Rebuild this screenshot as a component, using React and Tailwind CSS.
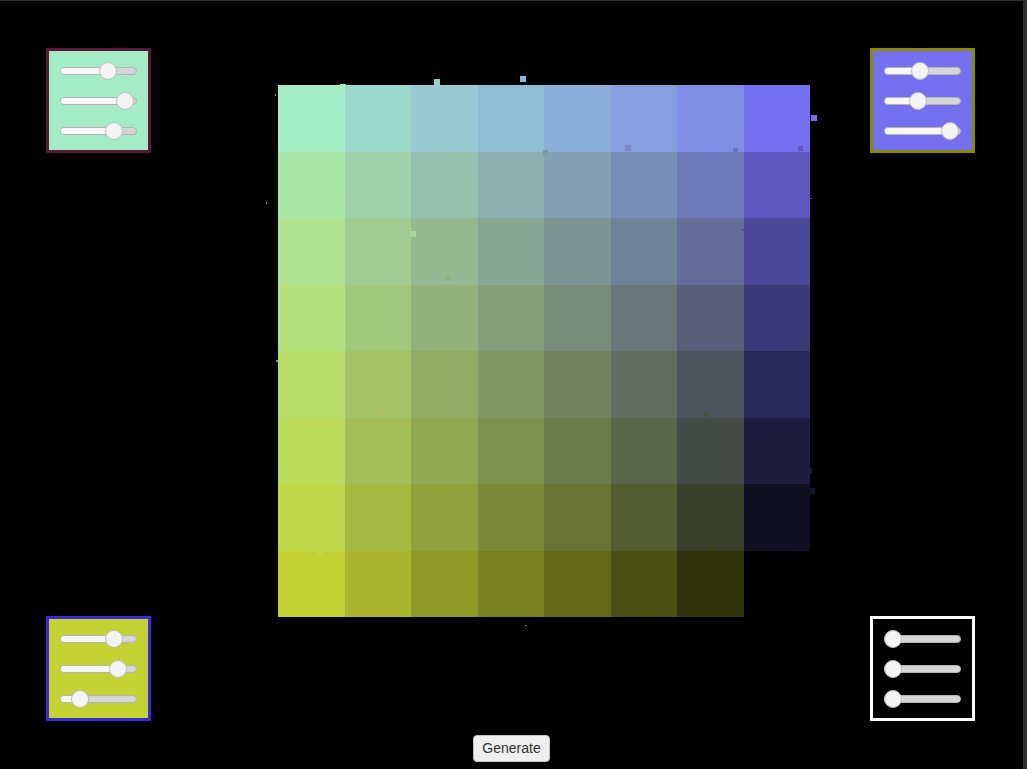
import React from "react";

const TL = [163, 236, 197];
const TR = [117, 112, 240];
const BL = [196, 211, 52];
const BR = [0, 0, 0];

const U = [0, 0.143, 0.27, 0.39, 0.5, 0.62, 0.76, 1];
const V = [0, 0.21, 0.36, 0.5, 0.63, 0.74, 0.86, 1];

function lerp(a, b, t) {
  return a.map((v, i) => v + (b[i] - v) * t);
}

function cellColor(r, c) {
  const s = U[c];
  const t = V[r];
  const top = lerp(TL, TR, s);
  const bot = lerp(BL, BR, s);
  const m = lerp(top, bot, t).map((v) => Math.round(v));
  return `rgb(${m[0]},${m[1]},${m[2]})`;
}

const panels = {
  tl: { bg: TL, border: "border-[#5a1838]", vals: [0.656, 0.944, 0.758] },
  tr: { bg: TR, border: "border-[#8a8a00]", vals: [0.463, 0.43, 0.966] },
  bl: { bg: BL, border: "border-[#3a2ad4]", vals: [0.768, 0.836, 0.19] },
  br: { bg: BR, border: "border-white", vals: [0, 0, 0] },
};

function Slider({ v }) {
  const left = v * 59;
  return (
    <div className="relative w-[77px] h-[18px] flex items-center">
      <div className="w-full h-[8px] rounded-full border border-[#b4b4b4] bg-[#d6d6d6] overflow-hidden flex">
        <div className="h-full bg-[#f7f7f7]" style={{ width: left + 9 }} />
      </div>
      <div
        className="absolute top-0 w-[18px] h-[18px] rounded-full bg-[#f4f4f4] border border-[#bcbcbc]"
        style={{ left }}
      />
    </div>
  );
}

function Panel({ p }) {
  const c = panels[p];
  return (
    <div
      className={`w-[105px] h-[105px] border-[3px] ${c.border} flex flex-col pl-[11px] pt-[11px] gap-[12px]`}
      style={{ backgroundColor: `rgb(${c.bg[0]},${c.bg[1]},${c.bg[2]})` }}
    >
      {c.vals.map((v, i) => (
        <Slider key={i} v={v} />
      ))}
    </div>
  );
}

const particles = [
  [340, 83, 6, 3, "#a6ecc4"],
  [434, 78, 6, 6, "#97cfcf"],
  [520, 75, 6, 6, "#8cb8d8"],
  [811, 114, 6, 6, "#7570f0"],
  [543, 149, 5, 5, "#7f97a3"],
  [625, 144, 6, 6, "#7888c4"],
  [733, 147, 5, 5, "#6e78c0"],
  [798, 145, 5, 5, "#5a57c0"],
  [312, 150, 6, 3, "#a8e8b0"],
  [275, 93, 1, 2, "#8aa0a0"],
  [410, 230, 6, 6, "#a8da94"],
  [445, 274, 6, 6, "#8fb47e"],
  [266, 201, 1, 2, "#6a7a6a"],
  [276, 359, 2, 2, "#90a060"],
  [378, 408, 6, 6, "#a8c060"],
  [317, 551, 6, 4, "#c0d458"],
  [525, 624, 2, 1, "#8a9a40"],
  [703, 412, 6, 6, "#4a5048"],
  [810, 467, 2, 6, "#1e1e40"],
  [810, 487, 5, 6, "#151530"],
  [709, 544, 6, 6, "#3a4018"],
  [810, 197, 2, 1, "#5a58b0"],
  [742, 228, 2, 2, "#505890"],
];

export default function App() {
  const cells = [];
  for (let r = 0; r < 8; r++) {
    for (let c = 0; c < 8; c++) {
      cells.push(
        <div key={`${r}-${c}`} style={{ backgroundColor: cellColor(r, c) }} />
      );
    }
  }
  return (
    <div
      className="relative w-[1027px] h-[769px] bg-black border-t border-r-4 border-[#303030] overflow-hidden flex flex-col"
      style={{ fontFamily: '"Liberation Sans", Arial, sans-serif' }}
    >
      <div className="flex items-start">
        <div className="ml-[46px] pt-[47px] flex flex-col gap-[463px]">
          <Panel p="tl" />
          <Panel p="bl" />
        </div>
        <div className="ml-[127px] mt-[84px] w-[532px] h-[532px] grid grid-cols-8 grid-rows-8">
          {cells}
        </div>
        <div className="ml-[60px] pt-[47px] flex flex-col gap-[463px]">
          <Panel p="tr" />
          <Panel p="br" />
        </div>
      </div>
      <div className="flex justify-center mt-[14px]">
        <button className="h-[27px] px-[8px] rounded-[4px] border border-[#c2c2c2] bg-[#efefef] text-[14px] text-[#333]">
          Generate
        </button>
      </div>
      {particles.map(([x, y, w, h, col], i) => (
        <div
          key={i}
          className="absolute"
          style={{ left: x, top: y, width: w, height: h, backgroundColor: col }}
        />
      ))}
    </div>
  );
}
